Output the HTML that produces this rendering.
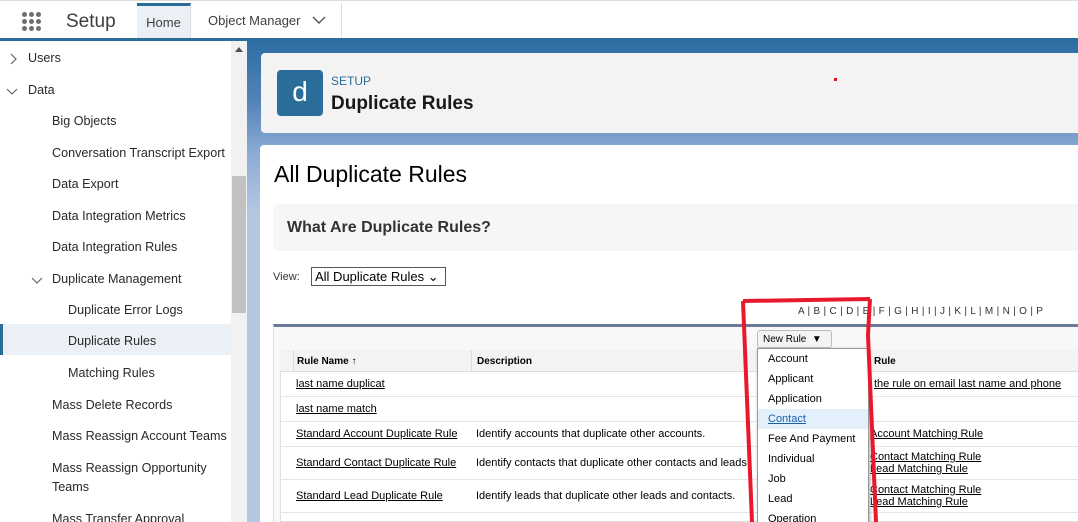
<!DOCTYPE html>
<html style="width:1078px;height:522px;overflow:hidden"><head><meta charset="utf-8"><style>
*{margin:0;padding:0;box-sizing:border-box}
body{width:1078px;height:522px;overflow:hidden;font-family:"Liberation Sans",sans-serif;background:#fff;position:relative}
.top{position:absolute;left:0;top:0;width:1078px;height:38px;background:#fff;border-top:1px solid #ddd}
.bar{position:absolute;left:0;top:38px;width:1078px;height:3px;background:#2a6d99}
.grid{position:absolute;left:22px;top:11px}
.grid i{position:absolute;width:5px;height:5px;border-radius:50%;background:#706e6b}
.setup{position:absolute;left:66px;top:10px;font-size:19px;color:#3e3e3c}
.home{position:absolute;left:137px;top:2px;width:54px;height:36px;background:#eaf0f5;border-top:3px solid #2a6d99;font-size:13px;color:#3e3e3c;text-align:center;padding-top:9px;border-right:1px solid #ddd}
.om{position:absolute;left:191px;top:2px;width:151px;height:36px;border-right:1px solid #ddd;font-size:13px;color:#3e3e3c;padding:10px 0 0 17px}
.side{position:absolute;left:0;top:41px;width:232px;height:481px;background:#fff;overflow:hidden}
.side div{position:absolute;font-size:12.6px;color:#2b2826;white-space:nowrap}
.side svg{position:absolute}
.sb{position:absolute;left:231px;top:41px;width:16px;height:481px;background:#f1f1f1}
.bg{position:absolute;left:247px;top:41px;width:831px;height:481px;background:linear-gradient(#2d6ea3 0,#5383b8 60px,#8aa9d2 110px,#b3c6e2 170px,#b3c6e2 100%)}
.hcard{position:absolute;left:261px;top:53px;width:817px;height:80px;background:#f3f3f3;border-radius:4px 0 0 4px}
.main{position:absolute;left:260px;top:145px;width:818px;height:377px;background:#fff;border-radius:4px 0 0 0;overflow:hidden}
a{color:#000;text-decoration:underline}
.t{position:absolute;font-size:11px;color:#000;white-space:nowrap}
</style></head><body>
<div class="top">
<div class="grid"><i style="left:0;top:0"></i><i style="left:7px;top:0"></i><i style="left:14px;top:0"></i><i style="left:0;top:7px"></i><i style="left:7px;top:7px"></i><i style="left:14px;top:7px"></i><i style="left:0;top:14px"></i><i style="left:7px;top:14px"></i><i style="left:14px;top:14px"></i></div>
<div class="setup">Setup</div>
<div class="home">Home</div>
<div class="om">Object Manager <svg width="14" height="10" style="margin-left:8px" viewBox="0 0 14 10"><path d="M1 2l6 6 6-6" stroke="#555" fill="none" stroke-width="1.4"/></svg></div>
</div>
<div class="bar"></div>
<div class="side">
<svg style="left:8px;top:12px" width="10" height="12" viewBox="0 0 10 12"><path d="M3 1l5 5-5 5" stroke="#666" fill="none" stroke-width="1.2"/></svg><div style="left:28px;top:10px">Users</div>
<svg style="left:6px;top:45px" width="12" height="10" viewBox="0 0 12 10"><path d="M1 3l5 5 5-5" stroke="#666" fill="none" stroke-width="1.2"/></svg><div style="left:28px;top:42px">Data</div>
<div style="left:52px;top:73px">Big Objects</div>
<div style="left:52px;top:105px">Conversation Transcript Export</div>
<div style="left:52px;top:136px">Data Export</div>
<div style="left:52px;top:168px">Data Integration Metrics</div>
<div style="left:52px;top:199px">Data Integration Rules</div>
<svg style="left:31px;top:234px" width="12" height="10" viewBox="0 0 12 10"><path d="M1 3l5 5 5-5" stroke="#666" fill="none" stroke-width="1.2"/></svg><div style="left:52px;top:231px">Duplicate Management</div>
<div style="left:68px;top:262px">Duplicate Error Logs</div>
<div style="left:0;top:283px;width:231px;height:31px;background:#eaf0f5;border-left:3px solid #2a6d99"></div>
<div style="left:68px;top:293px">Duplicate Rules</div>
<div style="left:68px;top:325px">Matching Rules</div>
<div style="left:52px;top:357px">Mass Delete Records</div>
<div style="left:52px;top:388px">Mass Reassign Account Teams</div>
<div style="left:52px;top:420px">Mass Reassign Opportunity</div>
<div style="left:52px;top:439px">Teams</div>
<div style="left:52px;top:471px">Mass Transfer Approval</div>
</div>
<div class="sb"><div style="position:absolute;left:1px;top:135px;width:14px;height:137px;background:#c1c1c1"></div><div style="position:absolute;left:4px;top:6px;border:4px solid transparent;border-bottom:5px solid #505050;border-top:0"></div></div>
<div class="bg"></div>
<div class="hcard">
<div style="position:absolute;left:16px;top:17px;width:46px;height:46px;background:#2a6d99;border-radius:4px;color:#fff;font-size:28px;text-align:center;line-height:44px">d</div>
<div style="position:absolute;left:70px;top:21px;font-size:12px;color:#2a6d99">SETUP</div>
<div style="position:absolute;left:70px;top:40px;font-size:19px;font-weight:bold;color:#181818">Duplicate Rules</div>
<div style="position:absolute;left:573px;top:25px;width:3px;height:3px;background:#e0101f"></div>
</div>
<div class="main">
<div style="position:absolute;left:14px;top:16px;font-size:23px;color:#000">All Duplicate Rules</div>
<div style="position:absolute;left:13px;top:59px;width:805px;height:47px;background:#f6f6f6;border-radius:6px 0 0 6px"><div style="position:absolute;left:14px;top:15px;font-size:16px;font-weight:bold;color:#333">What Are Duplicate Rules?</div></div>
<div class="t" style="left:13px;top:126px;color:#333">View:</div>
<div style="position:absolute;left:51px;top:122px;width:135px;height:19px;border:1px solid #555;font-size:13px;padding:1px 3px;color:#000">All Duplicate Rules ⌄</div>
<div class="t" style="left:538px;top:161px;font-size:10px;color:#333;letter-spacing:0.3px">A | B | C | D | E | F | G | H | I | J | K | L | M | N | O | P</div>
<div style="position:absolute;left:13px;top:179px;width:805px;height:198px;border-top:3px solid #6b7a99;border-left:1px solid #ddd;background:#f8f8f8"></div>
<div style="position:absolute;left:20px;top:205px;width:798px;height:172px;background:#fff;border:1px solid #e0e0e0;border-right:0"></div>
<div style="position:absolute;left:20px;top:205px;width:798px;height:22px;background:#f2f3f3;border-bottom:1px solid #ddd"></div>
<div style="position:absolute;left:33px;top:205px;width:1px;height:22px;background:#ddd"></div>
<div style="position:absolute;left:211px;top:205px;width:1px;height:22px;background:#ddd"></div>
<div class="t" style="left:37px;top:211px;font-size:10px;font-weight:bold">Rule Name ↑</div>
<div class="t" style="left:217px;top:211px;font-size:10px;font-weight:bold">Description</div>
<div class="t" style="left:614px;top:211px;font-size:10px;font-weight:bold">Rule</div>
<div class="t" style="left:36px;top:233px"><a>last name duplicat</a></div>
<div class="t" style="left:614px;top:233px"><a>the rule on email last name and phone</a></div>
<div style="position:absolute;left:20px;top:251px;width:798px;border-top:1px solid #e5e5e5"></div>
<div class="t" style="left:36px;top:258px"><a>last name match</a></div>
<div style="position:absolute;left:20px;top:276px;width:798px;border-top:1px solid #e5e5e5"></div>
<div class="t" style="left:36px;top:283px"><a>Standard Account Duplicate Rule</a></div>
<div class="t" style="left:216px;top:283px">Identify accounts that duplicate other accounts.</div>
<div class="t" style="left:610px;top:283px"><a>Account Matching Rule</a></div>
<div style="position:absolute;left:20px;top:301px;width:798px;border-top:1px solid #e5e5e5"></div>
<div class="t" style="left:36px;top:312px"><a>Standard Contact Duplicate Rule</a></div>
<div class="t" style="left:216px;top:312px">Identify contacts that duplicate other contacts and leads</div>
<div class="t" style="left:610px;top:306px"><a>Contact Matching Rule</a></div>
<div class="t" style="left:610px;top:318px"><a>Lead Matching Rule</a></div>
<div style="position:absolute;left:20px;top:334px;width:798px;border-top:1px solid #e5e5e5"></div>
<div class="t" style="left:36px;top:345px"><a>Standard Lead Duplicate Rule</a></div>
<div class="t" style="left:216px;top:345px">Identify leads that duplicate other leads and contacts.</div>
<div class="t" style="left:610px;top:339px"><a>Contact Matching Rule</a></div>
<div class="t" style="left:610px;top:351px"><a>Lead Matching Rule</a></div>
<div style="position:absolute;left:20px;top:367px;width:798px;border-top:1px solid #e5e5e5"></div>
<div style="position:absolute;left:497px;top:185px;width:75px;height:18px;border:1px solid #bbb;border-radius:3px;background:#f4f4f4;font-size:10px;padding:3px 0 0 5px">New Rule &nbsp;▼</div>
<div style="position:absolute;left:497px;top:203px;width:112px;height:180px;background:#fff;border:1px solid #999;box-shadow:1px 1px 3px #aaa"></div>
<div style="position:absolute;left:498px;top:264px;width:110px;height:20px;background:#e3f0fb"></div>
<div class="t" style="left:508px;top:208px">Account</div>
<div class="t" style="left:508px;top:228px">Applicant</div>
<div class="t" style="left:508px;top:248px">Application</div>
<div class="t" style="left:508px;top:268px;color:#1a5fa8;text-decoration:underline">Contact</div>
<div class="t" style="left:508px;top:288px">Fee And Payment</div>
<div class="t" style="left:508px;top:308px">Individual</div>
<div class="t" style="left:508px;top:328px">Job</div>
<div class="t" style="left:508px;top:348px">Lead</div>
<div class="t" style="left:508px;top:368px">Operation</div>
</div>
<svg style="position:absolute;left:0;top:0" width="1078" height="522"><path d="M743 301 L870 299 M743 301 L752 522 M870 299 L868 335 L876 522" stroke="#e8192c" stroke-width="4" fill="none"/></svg>
</body></html>
